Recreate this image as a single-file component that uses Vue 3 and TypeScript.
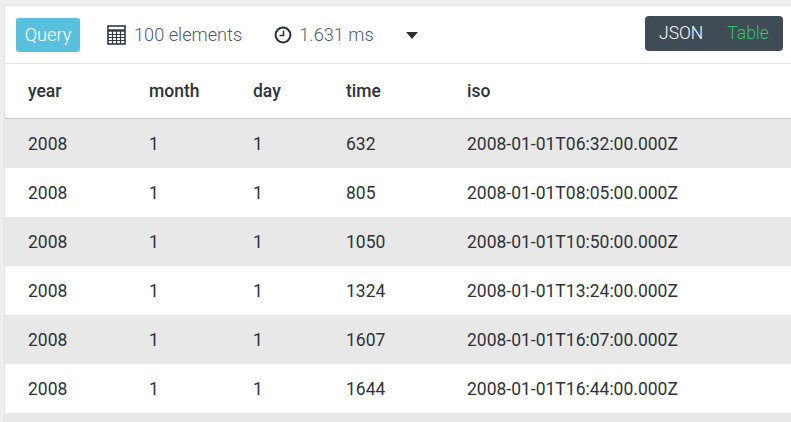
<script setup lang="ts">
const columns = ['year', 'month', 'day', 'time', 'iso']
const rows = [
  ['2008', '1', '1', '632', '2008-01-01T06:32:00.000Z'],
  ['2008', '1', '1', '805', '2008-01-01T08:05:00.000Z'],
  ['2008', '1', '1', '1050', '2008-01-01T10:50:00.000Z'],
  ['2008', '1', '1', '1324', '2008-01-01T13:24:00.000Z'],
  ['2008', '1', '1', '1607', '2008-01-01T16:07:00.000Z'],
  ['2008', '1', '1', '1644', '2008-01-01T16:44:00.000Z'],
  ['', '', '', '', ''],
]
</script>

<template>
  <div class="page">
    <div class="card">
      <div class="toolbar">
        <button class="query">Query</button>
        <span class="stat elements">
          <svg width="19" height="20" viewBox="0 0 19 20" fill="none" stroke="#33393f">
            <rect x="1" y="1" width="17" height="18" stroke-width="1.6" />
            <path d="M1 5.5h17" stroke-width="2.4" />
            <path d="M1 9.5h17M1 12.5h17M1 15.5h17M5.5 6v13M9.5 6v13M13.5 6v13" stroke-width="1.2" />
          </svg>
          <span>100 elements</span>
        </span>
        <span class="stat time">
          <svg width="18" height="18" viewBox="0 0 18 18" fill="none" stroke="#2b3036">
            <circle cx="9" cy="9" r="7.4" stroke-width="2" />
            <path d="M9.5 4.5v5H5.5" stroke-width="1.5" />
          </svg>
          <span>1.631 ms</span>
        </span>
        <span class="caret"></span>
        <div class="toggle">
          <span class="json">JSON</span>
          <span class="table-opt">Table</span>
        </div>
      </div>
      <div class="grid-row head">
        <div v-for="c in columns" :key="c">{{ c }}</div>
      </div>
      <div v-for="(r, i) in rows" :key="i" class="grid-row body" :class="{ odd: i % 2 === 0 }">
        <div v-for="(v, j) in r" :key="j">{{ v }}</div>
      </div>
    </div>
  </div>
</template>

<style>
html, body { margin: 0; overflow: hidden; }
</style>

<style scoped>
.page {
  width: 791px;
  height: 422px;
  overflow: hidden;
  background: #eeeeee;
  padding: 5px 0 0 4px;
  box-sizing: border-box;
  font-family: Roboto, "Liberation Sans", sans-serif;
}
.card {
  background: #fff;
  border-top: 1px solid #e3e3e3;
  border-left: 1px solid #e3e3e3;
}
.toolbar {
  display: flex;
  align-items: center;
  height: 57px;
  border-bottom: 1px solid #e3e3e3;
  padding: 0 8px 0 11px;
  box-sizing: content-box;
}
.query {
  width: 64px;
  height: 34px;
  padding: 0;
  border: 0;
  border-radius: 3px;
  background: #5bc0de;
  color: #fff;
  font: 300 18.2px Roboto, sans-serif;
}
.stat {
  display: flex;
  align-items: center;
  font-size: 18.2px;
  font-weight: 300;
  color: #4f5d6b;
}
.elements { margin-left: 27px; gap: 8px; }
.time { margin-left: 32px; gap: 7px; }
.caret {
  margin-left: 32px;
  margin-top: 2px;
  width: 0;
  height: 0;
  border-left: 6px solid transparent;
  border-right: 6px solid transparent;
  border-top: 7px solid #2b3036;
}
.toggle {
  margin-left: auto;
  width: 138px;
  height: 35px;
  margin-top: -3px;
  box-sizing: border-box;
  background: #3f4b55;
  border-radius: 4px;
  display: flex;
  align-items: center;
  padding-left: 14px;
  gap: 24px;
  font-size: 17.5px;
  font-weight: 300;
}
.json { color: #fff; }
.table-opt { color: #35c565; }
.grid-row {
  display: grid;
  grid-template-columns: 121px 104px 93px 121px 1fr;
  padding-left: 23px;
  font-size: 17.5px;
  align-items: center;
  color: #2f3338;
}
.head {
  height: 54px;
  border-bottom: 1px solid #c8c8c8;
  font-weight: 500;
}
.body { height: 49px; }
.odd { background: #e8e8e8; }
</style>
